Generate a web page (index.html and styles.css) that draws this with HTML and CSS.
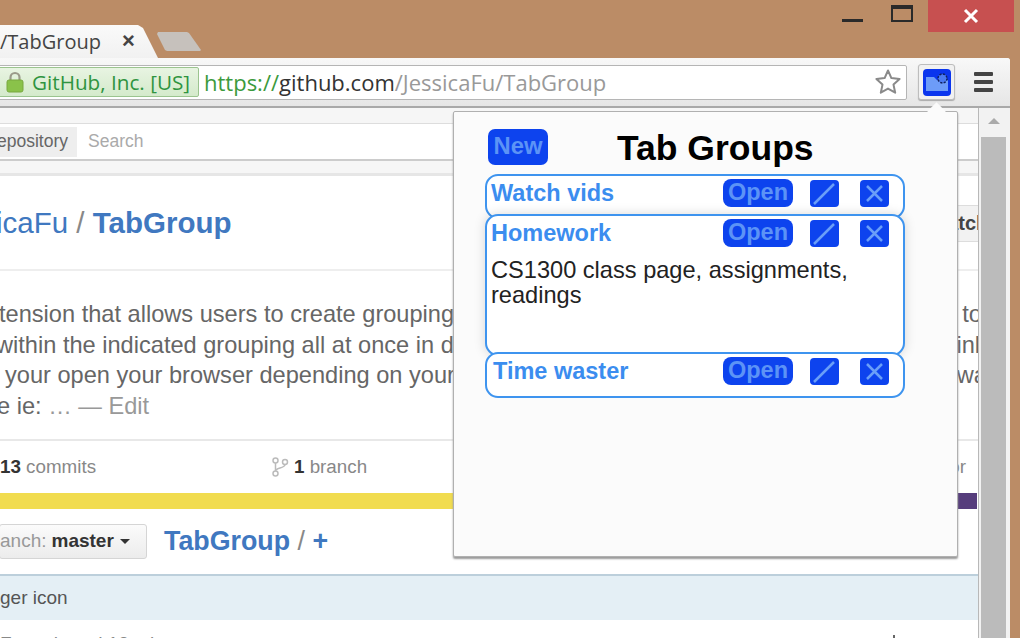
FILE: index.html
```html
<!DOCTYPE html>
<html lang="en">

<head>
    <meta charset="utf-8">
    <meta name="viewport" content="width=device-width, initial-scale=1.0">
    <title>Tab Groups</title>
    <link rel="stylesheet" href="styles.css">
</head>

<body>
    <div class="titlebar">
        <div class="tab">
            <span class="tab-title">/TabGroup</span>
            <span class="tab-close">&#215;</span>
        </div>
        <div class="new-tab"></div>
        <div class="window-controls">
            <div class="win-min"></div>
            <div class="win-max"></div>
            <div class="win-close">
                <svg width="16" height="16" viewBox="0 0 16 16">
                    <path d="M2 2L14 14M14 2L2 14" stroke="#fff" stroke-width="3" />
                </svg>
            </div>
        </div>
    </div>

    <div class="browser">
        <div class="toolbar">
            <div class="omnibox">
                <div class="ev-badge">
                    <svg width="18" height="22" viewBox="0 0 18 22">
                        <path d="M4.500 10V6.500a4.500 4.500 0 0 1 9 0V10" fill="none" stroke="#9a9a8a" stroke-width="2.200" />
                        <rect x="1" y="9" width="16" height="12" rx="2" fill="#8ac24a" stroke="#79a83f" />
                    </svg>
                    <span>GitHub, Inc. [US]</span>
                </div>
                <div class="url"><span class="url-scheme">https://</span><span class="url-host">github.com</span>/JessicaFu/TabGroup</div>
                <svg class="star" width="28" height="28" viewBox="0 0 28 28">
                    <path d="M14 2.500l3.400 7.600 8.200.9-6.100 5.600 1.700 8.100-7.200-4.100-7.200 4.100 1.700-8.100-6.100-5.600 8.200-.9z" fill="#fff" stroke="#8a8a8a" stroke-width="2" stroke-linejoin="round" />
                </svg>
            </div>
            <div class="ext-button">
                <div class="ext-icon">
                    <svg width="28" height="27" viewBox="0 0 28 27">
                        <rect width="28" height="27" rx="4" fill="#0a35ee" />
                        <path d="M3 8h8l3 3h11v11H3z" fill="#6d9cf8" />
                        <circle cx="19.500" cy="9.500" r="4.500" fill="#4a7af0" stroke="#10205c" stroke-width="1.500" stroke-dasharray="2.200 1.300" />
                    </svg>
                </div>
            </div>
            <div class="menu-button">
                <span></span>
                <span></span>
                <span></span>
            </div>
        </div>

        <div class="viewport">
            <div class="page">
                <div class="site-top">
                    <div class="search-bar">
                        <div class="search-scope">epository</div>
                        <div class="search-text">Search</div>
                    </div>
                </div>

                <div class="repo-head">
                    <h1 class="repo-title"><span class="owner">icaFu</span> <span class="slash">/</span> <strong>TabGroup</strong></h1>
                    <div class="watch-btn">Watch</div>
                </div>

                <div class="repo-desc">
                    <p class="desc-line desc-first"><span>tension that allows users to create grouping</span><span class="desc-end">to</span></p>
                    <p class="desc-line desc-second"><span>within the indicated grouping all at once in di</span><span class="desc-end">inl</span></p>
                    <p class="desc-line desc-third"><span>your open your browser depending on your</span><span class="desc-end">wa</span></p>
                    <p class="desc-line desc-fourth"><span>e ie: <span class="muted">&#8230; &#8212; Edit</span></span></p>
                </div>

                <div class="stats">
                    <div class="stat stat-commits"><b>13</b> commits</div>
                    <div class="stat stat-branch">
                        <svg width="17" height="20" viewBox="0 0 17 20">
                            <circle cx="3.500" cy="3.500" r="2.500" fill="none" stroke="#bbb" stroke-width="1.500" />
                            <circle cx="13" cy="5" r="2.500" fill="none" stroke="#bbb" stroke-width="1.500" />
                            <circle cx="3.500" cy="16.500" r="2.500" fill="none" stroke="#bbb" stroke-width="1.500" />
                            <path d="M3.500 6v8M13 7.500c0 4-9.500 3-9.500 6.500" fill="none" stroke="#bbb" stroke-width="1.500" />
                        </svg>
                        <span><b>1</b> branch</span>
                    </div>
                    <div class="stat stat-people">or</div>
                </div>

                <div class="lang-bar">
                    <div class="lang-js"></div>
                    <div class="lang-css"></div>
                </div>

                <div class="file-nav">
                    <div class="branch-btn">anch: <b>master</b><i class="caret"></i></div>
                    <div class="breadcrumb"><strong>TabGroup</strong> <span class="slash">/</span> <strong>+</strong></div>
                </div>

                <div class="commit-tease">ger icon</div>
                <div class="commit-meta">
                    <span>Fu authored 12 minutes ago</span>
                    <i class="commit-mark"></i>
                </div>
            </div>

            <div class="scrollbar">
                <div class="scroll-up"></div>
                <div class="scroll-thumb"></div>
            </div>
        </div>
    </div>

    <div class="popup">
        <div class="popup-arrow"></div>
        <div class="popup-head">
            <div class="btn-new">New</div>
            <div class="popup-title">Tab Groups</div>
        </div>

        <div class="group group-short">
            <div class="group-row">
                <div class="group-name">Watch vids</div>
                <div class="btn-open">Open</div>
                <div class="btn-icon btn-edit">
                    <svg width="29" height="27" viewBox="0 0 29 27">
                        <path d="M4 24L24 4" stroke="#6a9ff8" stroke-width="2.500" />
                    </svg>
                </div>
                <div class="btn-icon btn-del">
                    <svg width="29" height="27" viewBox="0 0 29 27">
                        <path d="M7 6L22 21M22 6L7 21" stroke="#6a9ff8" stroke-width="2.500" />
                    </svg>
                </div>
            </div>
        </div>

        <div class="group group-open">
            <div class="group-row">
                <div class="group-name">Homework</div>
                <div class="btn-open">Open</div>
                <div class="btn-icon btn-edit">
                    <svg width="29" height="27" viewBox="0 0 29 27">
                        <path d="M4 24L24 4" stroke="#6a9ff8" stroke-width="2.500" />
                    </svg>
                </div>
                <div class="btn-icon btn-del">
                    <svg width="29" height="27" viewBox="0 0 29 27">
                        <path d="M7 6L22 21M22 6L7 21" stroke="#6a9ff8" stroke-width="2.500" />
                    </svg>
                </div>
            </div>
            <div class="group-desc">CS1300 class page, assignments, readings</div>
        </div>

        <div class="group group-short group-last">
            <div class="group-row">
                <div class="group-name">Time waster</div>
                <div class="btn-open">Open</div>
                <div class="btn-icon btn-edit">
                    <svg width="29" height="27" viewBox="0 0 29 27">
                        <path d="M4 24L24 4" stroke="#6a9ff8" stroke-width="2.500" />
                    </svg>
                </div>
                <div class="btn-icon btn-del">
                    <svg width="29" height="27" viewBox="0 0 29 27">
                        <path d="M7 6L22 21M22 6L7 21" stroke="#6a9ff8" stroke-width="2.500" />
                    </svg>
                </div>
            </div>
        </div>
    </div>
</body>

</html>
```

FILE: styles.css
```css
* {
    margin: 0;
    padding: 0;
    box-sizing: border-box;
}

html,
body {
    height: 638px;
    overflow: hidden;
}

body {
    position: relative;
    font-family: "Liberation Sans", Arial, sans-serif;
    background: #bb8c66;
    color: #333;
}

/* window frame */
.titlebar {
    display: flex;
    height: 58px;
    width: 1020px;
}

.tab {
    display: flex;
    align-items: center;
    width: 158px;
    height: 33px;
    margin-top: 25px;
    padding-bottom: 1px;
    background: linear-gradient(#fafafa, #f1f1f1);
    clip-path: polygon(0 0, 138px 0, 143px 3px, 158px 33px, 0 33px);
    font-family: "Open Sans", sans-serif;
    font-size: 20px;
    color: #444;
}

.tab-title {
    width: 122px;
}

.tab-close {
    font-family: "Liberation Sans", sans-serif;
    font-size: 22px;
    font-weight: 700;
    color: #444;
}

.new-tab {
    width: 45px;
    height: 19px;
    margin: 32px 0 0 -2px;
    background: #c6c1bc;
    clip-path: polygon(2px 0, 31px 0, 33px 1px, 45px 18px, 44px 19px, 11px 19px, 9px 18px, 1px 2px);
}

.window-controls {
    display: flex;
    margin-left: auto;
    padding-right: 6px;
}

.win-min {
    width: 21px;
    height: 3px;
    margin: 19px 28px 0 0;
    background: #2a2a2a;
}

.win-max {
    width: 22px;
    height: 17px;
    margin: 5px 15px 0 0;
    border: 2px solid #2a2a2a;
    border-top-width: 4px;
}

.win-close {
    display: flex;
    align-items: center;
    justify-content: center;
    width: 86px;
    height: 32px;
    background: #c75050;
}

.browser {
    width: 1010px;
    height: 580px;
    background: #f2f2f2;
    border-top-right-radius: 3px;
    overflow: hidden;
}

/* toolbar */
.toolbar {
    display: flex;
    align-items: center;
    height: 50px;
    padding-right: 17px;
    background: linear-gradient(#f8f8f8, #e6e6e6);
    border-bottom: 2px solid #a9a9a9;
}

.omnibox {
    display: flex;
    align-items: center;
    flex: 1;
    height: 35px;
    margin-left: -3px;
    padding-right: 4px;
    background: #fff;
    border: 1px solid #b5b5b5;
    border-radius: 2px;
    font-family: "Open Sans", sans-serif;
    font-size: 22px;
}

.ev-badge {
    display: flex;
    align-items: center;
    gap: 8px;
    height: 30px;
    width: 201px;
    padding-left: 7px;
    background: linear-gradient(#e8f4e2, #d4eacb);
    border: 1px solid #9bc48f;
    border-radius: 2px;
    font-size: 20.700px;
    color: #2f9440;
    white-space: nowrap;
}

.url {
    margin-left: 5px;
    color: #999;
    white-space: nowrap;
}

.url-scheme {
    color: #3c9a3c;
}

.url-host {
    color: #333;
}

.star {
    margin-left: auto;
}

.ext-button {
    display: flex;
    align-items: center;
    justify-content: center;
    width: 37px;
    height: 36px;
    margin-left: 11px;
    background: #f1f1f1;
    border: 1px solid #bdbdbd;
    border-radius: 3px;
    box-shadow: 0 1px 1px #aaa;
}

.ext-icon {
    display: flex;
}

.menu-button {
    display: flex;
    flex-direction: column;
    gap: 4px;
    margin-left: 19px;
}

.menu-button span {
    width: 19px;
    height: 4px;
    background: #444;
    border-radius: 1px;
}

/* page behind the popup */
.viewport {
    display: flex;
    height: 530px;
}

.page {
    width: 978px;
    background: #fff;
    overflow: hidden;
}

.site-top {
    height: 68px;
    padding-top: 15px;
    background: #f6f6f6;
    border-bottom: 3px solid #e6e6e6;
}

.search-bar {
    display: flex;
    align-items: center;
    height: 38px;
    background: #fff;
    border-top: 1px solid #ddd;
    border-bottom: 2px solid #ccc;
    font-size: 17.500px;
}

.search-scope {
    display: flex;
    align-items: center;
    width: 77px;
    height: 30px;
    background: #eee;
    color: #666;
    white-space: nowrap;
    overflow: hidden;
    justify-content: flex-end;
    padding-right: 9px;
}

.search-text {
    margin-left: 11px;
    color: #aaa;
}

.repo-head {
    display: flex;
    align-items: center;
    justify-content: space-between;
    height: 95px;
    padding-top: 1px;
    border-bottom: 2px solid #eee;
}

.repo-title {
    font-size: 29.500px;
    font-weight: 400;
    color: #4078c0;
    white-space: nowrap;
}

.owner {
    margin-left: -4px;
}

.slash {
    color: #888;
}

.watch-btn {
    height: 37px;
    line-height: 35px;
    margin-right: -30px;
    width: 80px;
    background: #f2f2f2;
    border: 1px solid #ddd;
    font-size: 20px;
    font-weight: 700;
    color: #444;
}

.repo-desc {
    height: 170px;
    padding-top: 28px;
    border-bottom: 2px solid #e8e8e8;
    font-size: 23.600px;
    line-height: 30.700px;
    color: #666;
}

.desc-line {
    display: flex;
    justify-content: space-between;
    white-space: nowrap;
}

.desc-first {
    margin-left: -1px;
}

.desc-second {
    margin-left: -4px;
}

.desc-third {
    margin-left: 5px;
}

.desc-fourth {
    margin-left: -3px;
}

.desc-first .desc-end {
    margin-right: -4px;
}

.desc-second .desc-end {
    margin-right: -2px;
}

.desc-third .desc-end {
    margin-right: -9px;
}

.muted {
    color: #999;
}

.stats {
    display: flex;
    align-items: center;
    height: 52px;
    font-size: 18.800px;
    color: #888;
}

.stat b {
    color: #333;
}

.stat-commits {
    width: 272px;
}

.stat-branch {
    display: flex;
    align-items: center;
    gap: 5px;
}

.stat-people {
    margin-left: auto;
    padding-right: 12px;
}

.lang-bar {
    display: flex;
    width: 977px;
    height: 16px;
}

.lang-js {
    flex: 1;
    background: #f1dc4f;
}

.lang-css {
    width: 100px;
    background: #563d7c;
}

.file-nav {
    display: flex;
    align-items: center;
    gap: 17px;
    height: 65px;
    padding-bottom: 1px;
}

.branch-btn {
    display: flex;
    align-items: center;
    height: 35px;
    width: 148px;
    margin-left: -1px;
    background: linear-gradient(#fbfbfb, #ececec);
    border: 1px solid #d5d5d5;
    border-radius: 3px;
    font-size: 19px;
    color: #999;
    white-space: nowrap;
}

.branch-btn b {
    margin-left: 5px;
    color: #333;
}

.caret {
    margin-left: 6px;
    border-top: 5px solid #333;
    border-left: 5px solid transparent;
    border-right: 5px solid transparent;
}

.breadcrumb {
    font-size: 26.800px;
    color: #4078c0;
    white-space: nowrap;
}

.commit-tease {
    height: 46px;
    line-height: 44px;
    background: #e4eff5;
    border-top: 2px solid #bccfdb;
    font-size: 19px;
    color: #555;
}

.commit-meta {
    display: flex;
    padding-top: 11px;
    font-size: 19px;
    line-height: 26px;
    color: #888;
}

.commit-mark {
    width: 2px;
    height: 3px;
    margin: 4px 0 0 655px;
    background: #666;
}

.scrollbar {
    width: 32px;
    padding: 10px 4px 0 2px;
    background: #f2f2f2;
    border-left: 1px solid #b8b8b8;
}

.scroll-up {
    width: 0;
    margin: 0 auto;
    border-bottom: 6px solid #aaa;
    border-left: 6px solid transparent;
    border-right: 6px solid transparent;
}

.scroll-thumb {
    height: 520px;
    margin-top: 13px;
    background: #bbb;
}

/* extension popup */
.popup {
    position: absolute;
    top: 111px;
    left: 453px;
    width: 505px;
    height: 446px;
    padding: 17px 52px 0 31px;
    background: #fbfbfb;
    border: 1px solid #b0b0b0;
    border-radius: 2px;
    box-shadow: 0 2px 2px #999;
}

.popup-arrow {
    position: absolute;
    top: -7px;
    left: 476px;
    width: 13px;
    height: 13px;
    background: #fbfbfb;
    transform: rotate(45deg);
}

.popup-head {
    display: flex;
    align-items: center;
    height: 36px;
    margin: 0 0 9px 3px;
}

.btn-new {
    width: 60px;
    height: 36px;
    line-height: 34px;
    text-align: center;
    background: #0d43ee;
    border-radius: 7px;
    font-size: 23.800px;
    font-weight: 700;
    color: #5c93f6;
}

.popup-title {
    margin: 2px 0 0 69px;
    font-size: 35.500px;
    font-weight: 700;
    color: #000;
}

.group {
    padding: 3px 14px 0 4px;
    background: #fff;
    border: 2px solid #3e94ef;
    border-radius: 13px;
}

.group-short {
    height: 45px;
}

.group-open {
    height: 142px;
    margin-top: -5px;
    box-shadow: 0 0 12px rgba(0, 0, 0, 0.15);
}

.group-last {
    height: 46px;
    margin-top: -4px;
}

.group-row {
    display: flex;
    align-items: center;
    height: 28px;
}

.group-name {
    font-size: 23.500px;
    font-weight: 700;
    color: #3b8def;
}

.group-last .group-name {
    padding-left: 2px;
}

.btn-open {
    width: 70px;
    height: 28px;
    line-height: 27px;
    margin-left: auto;
    text-align: center;
    background: #0d43ee;
    border-radius: 8px;
    font-size: 23.500px;
    font-weight: 700;
    color: #5c93f6;
}

.btn-icon {
    display: flex;
    width: 29px;
    height: 27px;
    background: #0d43ee;
    border-radius: 4px;
}

.btn-edit {
    margin-left: 17px;
}

.btn-del {
    margin-left: 21px;
}

.group-desc {
    margin-top: 11px;
    font-size: 23.600px;
    line-height: 25px;
    color: #222;
}
```
